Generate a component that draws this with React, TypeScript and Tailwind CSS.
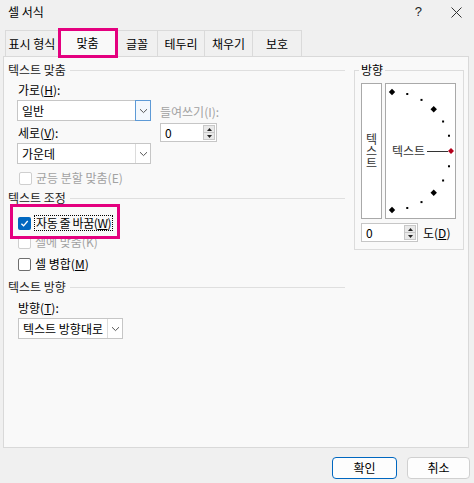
import type { ReactNode } from 'react';

function Chevron() {
  return (
    <svg width="9" height="6" viewBox="0 0 9 6">
      <path d="M1 1.2 L4.5 4.6 L8 1.2" fill="none" stroke="#555" strokeWidth="1" />
    </svg>
  );
}

function Select({ value, className, focus }: { value: string; className: string; focus?: boolean }) {
  return (
    <div className={`flex h-[21px] border border-[#c6c6c6] bg-white ${className}`}>
      <span className="flex-1 pl-[4px] leading-[19px]">{value}</span>
      <span
        className={`flex w-[15px] items-center justify-center ${
          focus ? '-m-px h-[21px] w-[16px] border border-[#5d9ad6] bg-[#f3f8fd]' : 'border-l border-[#dcdcdc]'
        }`}
      >
        <Chevron />
      </span>
    </div>
  );
}

function Spinner({ className }: { className: string }) {
  return (
    <div className={`flex h-[19px] items-center border border-[#c6c6c6] bg-white ${className}`}>
      <span className="flex-1 pl-[4px] leading-[17px]">0</span>
      <div className="mr-[1px] flex h-[15px] w-[12px] flex-col border border-[#c8c8c8] bg-[#e9e9e9]">
        <span className="flex flex-1 items-center justify-center border-b border-[#c8c8c8]">
          <svg width="5" height="3" viewBox="0 0 5 3">
            <path d="M0 3 L2.5 0 L5 3 Z" fill="#222" />
          </svg>
        </span>
        <span className="flex flex-1 items-center justify-center">
          <svg width="5" height="3" viewBox="0 0 5 3">
            <path d="M0 0 L2.5 3 L5 0 Z" fill="#222" />
          </svg>
        </span>
      </div>
    </div>
  );
}

function Checkbox({ checked, disabled }: { checked?: boolean; disabled?: boolean }) {
  if (checked) {
    return (
      <span className="flex h-[13px] w-[13px] items-center justify-center rounded-[2px] bg-[#0067c0]">
        <svg width="9" height="9" viewBox="0 0 9 9">
          <path d="M1.4 4.7 L3.6 6.8 L7.7 2" fill="none" stroke="white" strokeWidth="1.3" />
        </svg>
      </span>
    );
  }
  return (
    <span
      className={`h-[13px] w-[13px] rounded-[2px] border bg-white ${
        disabled ? 'border-[#cfcfcf]' : 'border-[#6e6e6e]'
      }`}
    />
  );
}

function SectionHeader({ children }: { children: ReactNode }) {
  return (
    <div className="flex h-[14px] items-center">
      <span className="leading-[14px] text-[#222]">{children}</span>
      <span className="ml-[4px] h-px flex-1 bg-[#dfdfdf]" />
    </div>
  );
}

function U({ children }: { children: ReactNode }) {
  return <span className="underline underline-offset-1">{children}</span>;
}

const tabs = [
  { label: '표시 형식', w: 'w-[54px]' },
  { label: '맞춤', w: 'w-[58px]', active: true },
  { label: '글꼴', w: 'w-[41px]' },
  { label: '테두리', w: 'w-[47px]' },
  { label: '채우기', w: 'w-[48px]' },
  { label: '보호', w: 'w-[49px]' },
];

// angles from 90 down to -90 in 15 degree steps
const dialPoints = Array.from({ length: 13 }, (_, i) => {
  const a = ((90 - i * 15) * Math.PI) / 180;
  return { x: 6 + 59 * Math.cos(a), y: 67 - 59 * Math.sin(a), big: i % 3 === 0, i };
});

function Dial() {
  return (
    <svg width="69" height="134" viewBox="0 0 69 134" className="block">
      {dialPoints.map((p) =>
        p.i === 6 ? (
          <polygon
            key={p.i}
            points={`${p.x},${p.y - 3} ${p.x + 3},${p.y} ${p.x},${p.y + 3} ${p.x - 3},${p.y}`}
            fill="#b3001b"
          />
        ) : p.big ? (
          <polygon
            key={p.i}
            points={`${p.x},${p.y - 3.2} ${p.x + 3.2},${p.y} ${p.x},${p.y + 3.2} ${p.x - 3.2},${p.y}`}
            fill="#000"
          />
        ) : (
          <rect key={p.i} x={p.x - 1} y={p.y - 1} width="2" height="2" fill="#000" />
        )
      )}
      <text x="6" y="71.5" fontSize="12" fill="#333" fontFamily="Noto Sans CJK KR, sans-serif">
        텍스트
      </text>
      <line x1="41" y1="67.5" x2="62" y2="67.5" stroke="#333" strokeWidth="1" />
    </svg>
  );
}

export default function App() {
  return (
    <div className="relative flex h-[483px] w-[474px] flex-col overflow-hidden bg-[#f0f0f0] font-['Noto_Sans_CJK_KR',sans-serif] text-[12px] text-black">
      {/* Title bar */}
      <div className="flex h-[24px] items-center pl-[8px]">
        <span className="flex-1 leading-[14px]">셀 서식</span>
        <span className="mr-[29px] font-['Liberation_Sans',sans-serif] text-[13px] leading-[14px] text-[#222]">?</span>
        <svg width="11" height="11" viewBox="0 0 11 11" className="mr-[12px]">
          <path d="M0.5 0.5 L10.5 10.5 M10.5 0.5 L0.5 10.5" stroke="#333" strokeWidth="1" />
        </svg>
      </div>

      {/* Tabs */}
      <div className="flex h-[32px] items-end pl-[5px]">
        {tabs.map((t, i) => (
          <div
            key={t.label}
            className={`flex items-center justify-center border-t border-r border-[#dadada] leading-[14px] ${t.w} ${
              i === 0 ? 'border-l' : ''
            } ${t.active ? 'relative z-10 -mb-px h-[29px] bg-[#f9f9f9]' : 'h-[26px] bg-[#f0f0f0]'}`}
          >
            {t.label}
          </div>
        ))}
      </div>

      {/* Panel */}
      <div className="ml-[3px] flex h-[392px] w-[466px] border border-[#d9d9d9] bg-[#f9f9f9] pl-[4px]">
        {/* Left column */}
        <div className="w-[337px] pt-[6px]">
          <SectionHeader>텍스트 맞춤</SectionHeader>
          <div className="pl-[9px]">
            <div className="mt-[6px] flex">
              <div className="w-[134px]">
                <div className="ml-[1px] h-[14px] leading-[14px]">
                  가로(<U>H</U>):
                </div>
                <Select value="일반" className="mt-[3px] w-[134px]" focus />
                <div className="ml-[1px] mt-[5px] h-[14px] leading-[14px]">
                  세로(<U>V</U>):
                </div>
                <Select value="가운데" className="mt-[3px] w-[134px]" />
              </div>
              <div className="ml-[9px]">
                <div className="mt-[22px] h-[14px] leading-[14px] text-[#a2a2a2]">들여쓰기(I):</div>
                <Spinner className="mt-[4px] w-[57px]" />
              </div>
            </div>
            <div className="mt-[7px] flex h-[14px] items-center gap-[4px] pl-[2px]">
              <Checkbox disabled />
              <span className="leading-[14px] text-[#a2a2a2]">균등 분할 맞춤(E)</span>
            </div>
          </div>

          <div className="mt-[6px]">
            <SectionHeader>텍스트 조정</SectionHeader>
          </div>
          <div className="pl-[10px]">
            <div className="mt-[11px] flex h-[14px] items-center gap-[3px]">
              <Checkbox checked />
              <span className="border border-dotted border-black px-[1px] leading-[14px] tracking-[-0.4px]">
                자동 줄 바꿈(<U>W</U>)
              </span>
            </div>
            <div className="mt-[5px] flex h-[14px] items-center gap-[4px]">
              <Checkbox disabled />
              <span className="leading-[14px] text-[#a2a2a2]">셀에 맞춤(K)</span>
            </div>
            <div className="mt-[8px] flex h-[14px] items-center gap-[4px]">
              <Checkbox />
              <span className="leading-[14px]">
                셀 병합(<U>M</U>)
              </span>
            </div>
          </div>

          <div className="mt-[9px]">
            <SectionHeader>텍스트 방향</SectionHeader>
          </div>
          <div className="pl-[10px]">
            <div className="mt-[7px] h-[14px] leading-[14px]">
              방향(<U>T</U>):
            </div>
            <Select value="텍스트 방향대로" className="mt-[3px] w-[105px]" />
          </div>
        </div>

        {/* Right column: orientation */}
        <div className="relative ml-[9px] mt-[13px] h-[180px] w-[110px] border border-[#dcdcdc] pl-[6px] pt-[12px]">
          <span className="absolute -top-[8px] left-[4px] bg-[#f9f9f9] px-[2px] leading-[14px]">방향</span>
          <div className="flex gap-[3px]">
            <div className="flex h-[136px] w-[21px] items-center justify-center border border-[#a9a9a9] bg-white text-[#333]">
              <span className="leading-[19px] [text-orientation:upright] [writing-mode:vertical-rl]">텍스트</span>
            </div>
            <div className="h-[136px] w-[71px] border border-[#a9a9a9] bg-white">
              <Dial />
            </div>
          </div>
          <div className="mt-[4px] flex items-center">
            <Spinner className="w-[57px]" />
            <span className="ml-[5px] leading-[14px]">
              도(<U>D</U>)
            </span>
          </div>
        </div>
      </div>

      {/* Footer */}
      <div className="flex flex-1 items-start justify-end gap-[10px] pr-[4px] pt-[9px]">
        <button className="h-[22px] w-[65px] rounded-[4px] border-[1.5px] border-[#0067c0] bg-[#fdfdfd] leading-[14px]">
          확인
        </button>
        <button className="h-[22px] w-[63px] rounded-[4px] border border-[#d0d0d0] bg-[#fdfdfd] leading-[14px]">
          취소
        </button>
      </div>

      {/* Highlight annotations */}
      <div className="pointer-events-none absolute left-[58px] top-[28px] z-20 h-[30px] w-[60px] border-[3px] border-[#e4007f]" />
      <div className="pointer-events-none absolute left-[10px] top-[204px] z-20 h-[35px] w-[110px] border-[3px] border-[#e4007f]" />
    </div>
  );
}
